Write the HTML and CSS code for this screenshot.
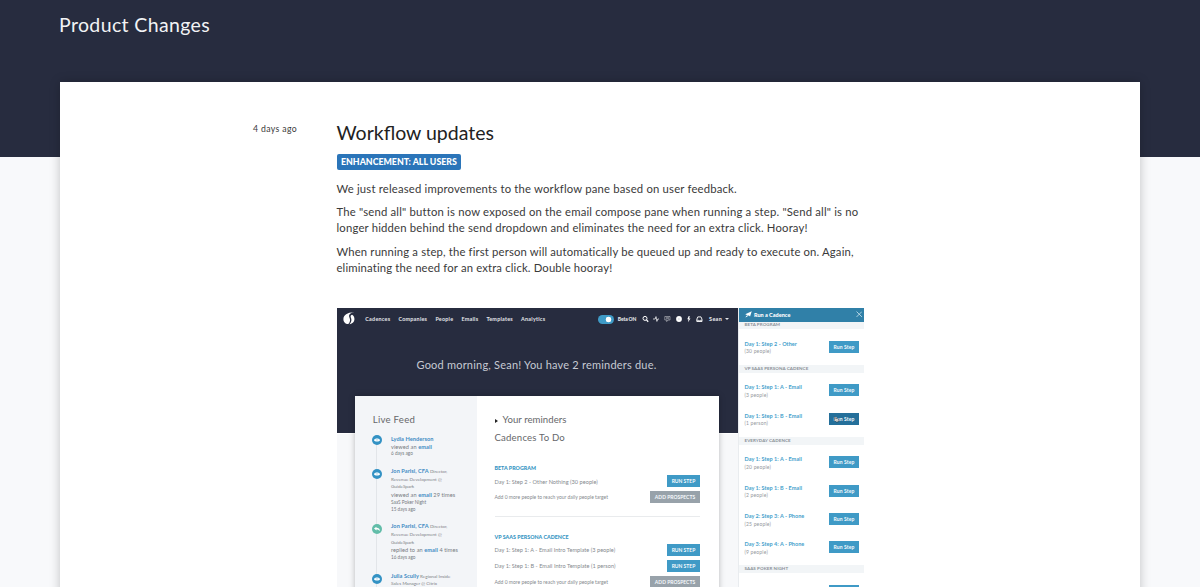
FILE: index.html
```
<!DOCTYPE html>
<html lang="en">
<head>
<meta charset="utf-8">
<title>Product Changes</title>
<link rel="stylesheet" href="styles.css">
</head>
<body>
<svg class="defs" aria-hidden="true">
  <symbol id="eye" viewBox="0 0 10 10"><path d="M1.9 5C2.6 2.9 7.4 2.9 8.1 5C7.4 7 2.6 7 1.9 5Z" fill="#fff"/><path d="M3.8 4.6Q5 5.6 6.2 4.6" stroke="#8fc3de" stroke-width=".7" fill="none"/></symbol>
  <symbol id="reply" viewBox="0 0 10 10"><path d="M2 4.6L4.4 2.7V3.8C6.9 3.8 8.1 5 7.7 7.3C7.1 6 6.2 5.5 4.4 5.5V6.6Z" fill="#fff"/></symbol>
</svg>
<header class="masthead"><h1>Product Changes</h1></header>
<main class="card">
  <time class="when">4 days ago</time>
  <article class="post">
    <h2>Workflow updates</h2>
    <span class="badge">ENHANCEMENT: ALL USERS</span>
    <p>We just released improvements to the workflow pane based on user feedback.</p>
    <p>The "send all" button is now exposed on the email compose pane when running a step. "Send all" is no<br>longer hidden behind the send dropdown and eliminates the need for an extra click. Hooray!</p>
    <p class="tight">When running a step, the first person will automatically be queued up and ready to execute on. Again,<br>eliminating the need for an extra click. Double hooray!</p>

    <section class="shot">
      <div class="app">
        <nav class="nav">
          <svg class="logo" viewBox="0 0 12 13"><path d="M11.2.3C7.6.9 5.6 2.3 6.1 4.4C6.6 6.4 8.4 8.6 5.3 12.1C2.2 11.9.3 9.7.4 6.9C.6 3.2 4.3.2 11.2.3Z" fill="#fff"/><path d="M9.1 2.7C12.1 4.2 12.4 9.3 9 11.3C8.2 11.9 7.2 12.2 6.4 12.2C8.6 9.9 8.8 7.7 7.9 5.7C7.3 4.2 7.6 3.1 9.1 2.7Z" fill="#fff"/></svg>
          <div class="links"><a>Cadences</a><a>Companies</a><a>People</a><a>Emails</a><a>Templates</a><a>Analytics</a></div>
          <i class="toggle"></i><b class="beta">Beta ON</b>
          <svg class="tools" viewBox="0 0 62 8" fill="none" stroke="#fff">
            <circle cx="3" cy="3.4" r="2" stroke-width="1"/><path d="M4.5 4.9L6.2 6.7" stroke-width="1.3"/>
            <path d="M11 4H13.2L14 1.6L14.9 6.4L15.8 4H17" stroke-width=".9" opacity=".8"/>
            <path d="M22.8 1.5H28V5H26L24.7 6.6V5H22.8ZM24 2.7H27M24 3.8H27" stroke-width=".7" opacity=".6"/>
            <circle cx="37" cy="4" r="2.9" fill="#fff" stroke="none"/><path d="M36.5 3V5L38 4Z" fill="#b9bfca" stroke="none"/>
            <path d="M46.7 1L45.3 4.2H46.5L46 7.2L48.5 3.5H47.2L47.7 1Z" fill="#fff" stroke="none"/>
            <path d="M54.8 4.3L55.8 1.9H59L60 4.3V6.5H54.8ZM54.8 5.2H56.4L56.8 5.9H58.2L58.5 5.2H60" stroke-width=".9"/>
          </svg>
          <b class="user">Sean</b><i class="caret"></i>
        </nav>
        <div class="greeting">Good morning, Sean! You have 2 reminders due.</div>
        <div class="board">
          <aside class="feed">
            <h3>Live Feed</h3>
            <div class="event first"><svg class="dot"><use href="#eye"/></svg><div><a>Lydia Henderson</a><p>viewed an <em>email</em></p><small>6 days ago</small></div></div>
            <div class="event long"><svg class="dot"><use href="#eye"/></svg><div><div class="who"><a>Jon Parisi, CFA</a> Director,<br>Revenue Development @<br>GuideSpark</div><p>viewed an <em>email</em> 29 times</p><small>SaaS Poker Night</small><small>15 days ago</small></div></div>
            <div class="event mid"><svg class="dot green"><use href="#reply"/></svg><div><div class="who"><a>Jon Parisi, CFA</a> Director,<br>Revenue Development @<br>GuideSpark</div><p>replied to an <em>email</em> 4 times</p><small>16 days ago</small></div></div>
            <div class="event"><svg class="dot"><use href="#eye"/></svg><div><div class="who"><a>Julia Scully</a> Regional Inside<br>Sales Manager @ Citrix</div></div></div>
          </aside>
          <div class="todo">
            <h3><i class="arrow"></i>Your reminders</h3>
            <h3 class="wide">Cadences To Do</h3>
            <div class="group">
              <h4>BETA PROGRAM</h4>
              <div class="row">Day 1: Step 2 - Other Nothing (30 people)<span class="btn">RUN STEP</span></div>
              <div class="row note">Add 0 more people to reach your daily people target<span class="btn gray">ADD PROSPECTS</span></div>
            </div>
            <div class="group last">
              <h4>VP SAAS PERSONA CADENCE</h4>
              <div class="row">Day 1: Step 1: A - Email Intro Template (3 people)<span class="btn">RUN STEP</span></div>
              <div class="row">Day 1: Step 1: B - Email Intro Template (1 person)<span class="btn">RUN STEP</span></div>
              <div class="row note">Add 0 more people to reach your daily people target<span class="btn gray">ADD PROSPECTS</span></div>
            </div>
          </div>
        </div>
      </div>
      <aside class="pane">
        <header class="pane-head">
          <svg class="rocket" viewBox="0 0 8 8"><path d="M7.7.3L5.8 6.2L4.1 4.9L2.9 6.5L2.7 4.9L.3 3.6Z" fill="#fff"/><path d="M1.6 5.2L.5 7.3L2.7 6.3Z" fill="#fff"/></svg>
          <span>Run a Cadence</span>
          <svg class="close" viewBox="0 0 7 7"><path d="M.6.6L6.4 6.4M6.4.6L.6 6.4" stroke="#d9edf6" stroke-width=".8"/></svg>
        </header>
        <h5>BETA PROGRAM</h5>
        <div class="steps"><div class="step"><div><b>Day 1: Step 2 - Other</b><small>(30 people)</small></div><span class="btn">Run Step</span></div></div>
        <h5>VP SAAS PERSONA CADENCE</h5>
        <div class="steps">
          <div class="step"><div><b>Day 1: Step 1: A - Email</b><small>(3 people)</small></div><span class="btn">Run Step</span></div>
          <div class="step"><div><b>Day 1: Step 1: B - Email</b><small>(1 person)</small></div><span class="btn hover">Run Step<svg class="hand" viewBox="0 0 8 8"><path d="M1.2 1.2Q2 .6 2.5 1.7L3.2 3L5.7 3.3Q6.7 3.8 6.5 5L6 6.7H3.7L1.6 4.7Q1.5 4 2.4 4.2Z" fill="#fff" stroke="#222" stroke-width=".6"/><path d="M4 4.2V5.5M5.1 4.3V5.5" stroke="#333" stroke-width=".4"/></svg></span></div>
        </div>
        <h5>EVERYDAY CADENCE</h5>
        <div class="steps">
          <div class="step"><div><b>Day 1: Step 1: A - Email</b><small>(20 people)</small></div><span class="btn">Run Step</span></div>
          <div class="step"><div><b>Day 1: Step 1: B - Email</b><small>(2 people)</small></div><span class="btn">Run Step</span></div>
          <div class="step"><div><b>Day 2: Step 3: A - Phone</b><small>(25 people)</small></div><span class="btn">Run Step</span></div>
          <div class="step"><div><b>Day 3: Step 4: A - Phone</b><small>(9 people)</small></div><span class="btn">Run Step</span></div>
        </div>
        <h5>SAAS POKER NIGHT</h5>
        <div class="steps"><div class="step"><div></div><span class="btn"></span></div></div>
      </aside>
    </section>
  </article>
</main>
</body>
</html>
```
FILE: styles.css
```
* { box-sizing: border-box; margin: 0; padding: 0; }
html, body { height: 587px; overflow: hidden; }
body { background: #f8f9fb; font-family: Lato, "Liberation Sans", sans-serif; color: #3a3a3a; white-space: nowrap; }
i, em { font-style: normal; }
svg { display: block; flex: none; }
.defs { width: 0; height: 0; position: absolute; }

.masthead { height: 157px; background: #272c3f; padding: 11px 0 0 59px; }
.masthead h1 { font-size: 19.5px; line-height: 28px; font-weight: 400; letter-spacing: .0186em; color: #f2f3f5; }

.card { display: grid; grid-template-columns: 237px 528px; column-gap: 39.5px; width: 1080px; height: 520px; margin: -75px auto 0; background: #fff; box-shadow: 0 0 10px rgba(0,0,0,.22); }
.when { padding-top: 41px; text-align: right; font-size: 8.7px; line-height: 12px; letter-spacing: .04em; }
.post { padding-top: 38px; display: flex; flex-direction: column; align-items: flex-start; }
.post h2 { font-size: 19.5px; line-height: 25px; font-weight: 400; color: #222; }
.badge { margin: 8.5px 0 11px; padding: 0 4.5px; height: 16px; line-height: 15px; border-radius: 2px; background: #2b75b9; color: #fff; font-size: 8.8px; font-weight: 900; letter-spacing: 0; }
.post > p { font-size: 11.3px; line-height: 16px; letter-spacing: .0165em; margin-bottom: 7.8px; }
.post > p.tight { letter-spacing: .0134em; }

.shot { display: flex; width: 527.5px; height: 300px; margin-top: 24.4px; background: #f7f8fa; }
.app { width: 402px; display: flex; flex-direction: column; background: linear-gradient(#272c3f 125.5px, #fff 125.5px, #fff 126.5px, #f7f8fa 126.5px); border-right: 1px solid #e9ecef; }
.nav { display: flex; align-items: center; height: 22px; padding-left: 6.5px; color: #e4e6ea; font-size: 5.4px; font-weight: 700; }
.logo { width: 12px; height: 13px; margin-top: -1px; }
.links { display: flex; justify-content: space-between; width: 180px; margin-left: 10.3px; letter-spacing: .045em; }
.toggle { width: 16px; height: 9px; margin-left: 52.5px; border-radius: 5px; background: radial-gradient(circle at 10.5px 4.5px, #fff 2.6px, transparent 3.1px), #3f9bc7; }
.beta { margin-left: 4px; font-size: 5px; letter-spacing: -.03em; width: 21px; }
.tools { width: 62px; height: 8px; margin-left: 3.3px; }
.user { margin-left: 5px; letter-spacing: .06em; }
.caret { margin-left: 3px; border: 2px solid transparent; border-top: 2.5px solid #e4e6ea; border-bottom: 0; }
.greeting { height: 66px; line-height: 69px; padding-left: 80px; font-size: 11px; letter-spacing: .0189em; color: #c6cad3; }
.board { display: flex; width: 364px; height: 212px; margin-left: 18px; background: #fff; box-shadow: 0 0 6px rgba(0,0,0,.25); }
.board h3 { font-weight: 400; font-size: 9.6px; line-height: 12px; color: #66676a; letter-spacing: .004em; }
.feed { width: 122px; background: #f3f5f8; padding: 17.5px 0 0 18.3px; }
.feed h3 { letter-spacing: .0254em; margin-bottom: 9px; }
.event { display: flex; gap: 9.2px; font-size: 5.6px; line-height: 7.8px; color: #777b81; position: relative; }
.event::before { content: ""; position: absolute; left: 3.5px; top: 0; bottom: 0; width: 1px; background: #e2e5e9; }
.event.first { height: 33.5px; }
.event.long { height: 55.5px; }
.event.mid { height: 49.3px; }
.dot { position: relative; width: 10px; height: 10px; margin-left: -1px; margin-top: .5px; border-radius: 50%; background: #3392c4; }
.dot.green { background: #62bda9; }
.event a { color: #3f8cc4; font-size: 5.6px; font-weight: 700; letter-spacing: .012em; line-height: 1; }
.event.first a { display: block; line-height: 7.8px; }
.event p { letter-spacing: .014em; }
.event em { color: #3f8cc4; font-weight: 700; }
.who { font-size: 4.6px; color: #7d8186; margin-top: -.4px; margin-bottom: -.4px; }
.event small { display: block; font-size: 4.7px; line-height: 6.9px; }

.todo { flex: 1; padding: 17.5px 18.5px 0 18px; }
.todo h3 { display: flex; align-items: center; margin-bottom: 6px; }
.todo h3.wide { letter-spacing: .0189em; margin-bottom: 20.5px; }
.arrow { border: 2px solid transparent; border-left: 3px solid #222; border-right: 0; margin: 2px 5px 0 0; }
.group { border-bottom: 1px solid #e9ebed; height: 53px; margin-bottom: 15.5px; }
.group.last { border: 0; margin: 0; }
.group h4 { font-size: 5.3px; line-height: 9px; font-weight: 900; letter-spacing: .005em; color: #3695c3; margin-bottom: 1.8px; }
.row { display: flex; justify-content: space-between; align-items: center; height: 12px; margin-bottom: 4.2px; font-size: 5.6px; letter-spacing: .004em; color: #85898e; }
.note { font-size: 5px; letter-spacing: -.0018em; }
.btn { display: flex; align-items: center; justify-content: center; width: 33px; height: 12px; background: #3f9ac6; color: #f4f9fc; font-size: 5px; font-weight: 700; letter-spacing: 0; }
.btn.gray { width: 50px; background: #98a2aa; }

.pane { flex: 1; background: #fff; }
.pane-head { display: flex; align-items: center; height: 13.5px; padding: 0 2px 1px 6px; background: #3080a8; color: #fff; font-size: 5.5px; font-weight: 900; }
.rocket { width: 7px; height: 7px; margin-right: 2.5px; }
.close { width: 6.5px; height: 6.5px; margin-left: auto; }
.pane h5 { height: 8px; line-height: 8px; padding-left: 6px; background: #f2f5f7; color: #8b9197; font-size: 4.5px; font-weight: 700; letter-spacing: .016em; }
.pane-head + h5 { height: 7.6px; line-height: 6.6px; }
.steps { padding-top: 11.5px; padding-bottom: 12px; display: flex; flex-direction: column; gap: 16.4px; }
.step { display: flex; justify-content: space-between; height: 12px; padding: 0 5px 0 6px; }
.step b, .step small { display: block; }
.step b { font-size: 5.5px; line-height: 7.5px; letter-spacing: .006em; color: #46a1cc; }
.step small { font-size: 5px; line-height: 7.3px; letter-spacing: .0357em; color: #94989d; }
.pane .btn { position: relative; width: 30px; letter-spacing: .026em; }
.pane .btn.hover { background: #246f9a; }
.hand { position: absolute; left: 4px; top: 3px; width: 7px; height: 7px; }
```
